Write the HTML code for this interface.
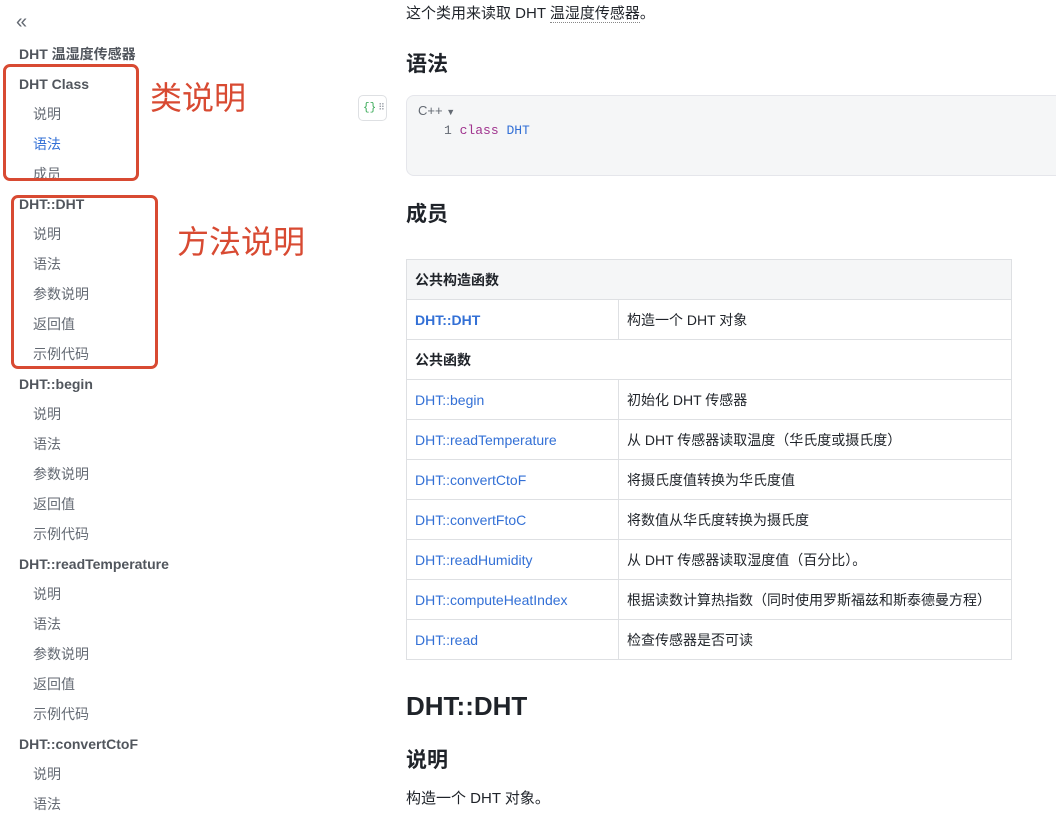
<!DOCTYPE html>
<html><head><meta charset="utf-8"><style>
*{margin:0;padding:0;box-sizing:border-box}
body{width:1056px;height:810px;overflow:hidden;background:#fff;font-family:"Liberation Sans","Noto Sans CJK SC",sans-serif;position:relative;color:#1f2329}
.s{position:absolute;font-size:14px;line-height:20px;white-space:nowrap}
.h{left:19px;font-weight:bold;color:#51565d}
.i{left:33px;color:#646a73}
.box{position:absolute;border:3px solid #d84a32;border-radius:7px}
.lab{position:absolute;color:#d84a32;font-size:32px;line-height:36px}
table{position:absolute;left:406px;top:259px;width:606px;border-collapse:collapse;font-size:14px}
td{border:1px solid #dee0e3;height:40px;padding:0 8px;color:#1f2329}
td a{color:#3370d6}
.gr td{background:#f5f6f7;font-weight:bold}
</style></head><body>
<div class="s" style="left:16px;top:12px;font-size:20px;color:#646a73">«</div>
<div class="s h" style="top:44px">DHT 温湿度传感器</div>
<div class="s h" style="top:74px">DHT Class</div>
<div class="s i" style="top:104px">说明</div>
<div class="s i" style="top:134px;color:#3370d6">语法</div>
<div class="s i" style="top:164px">成员</div>
<div class="s h" style="top:194px">DHT::DHT</div>
<div class="s i" style="top:224px">说明</div>
<div class="s i" style="top:254px">语法</div>
<div class="s i" style="top:284px">参数说明</div>
<div class="s i" style="top:314px">返回值</div>
<div class="s i" style="top:344px">示例代码</div>
<div class="s h" style="top:374px">DHT::begin</div>
<div class="s i" style="top:404px">说明</div>
<div class="s i" style="top:434px">语法</div>
<div class="s i" style="top:464px">参数说明</div>
<div class="s i" style="top:494px">返回值</div>
<div class="s i" style="top:524px">示例代码</div>
<div class="s h" style="top:554px">DHT::readTemperature</div>
<div class="s i" style="top:584px">说明</div>
<div class="s i" style="top:614px">语法</div>
<div class="s i" style="top:644px">参数说明</div>
<div class="s i" style="top:674px">返回值</div>
<div class="s i" style="top:704px">示例代码</div>
<div class="s h" style="top:734px">DHT::convertCtoF</div>
<div class="s i" style="top:764px">说明</div>
<div class="s i" style="top:794px">语法</div>
<div class="box" style="left:3px;top:64px;width:136px;height:117px"></div>
<div class="box" style="left:11px;top:195px;width:147px;height:174px"></div>
<div class="lab" style="left:150px;top:80px">类说明</div>
<div class="lab" style="left:177px;top:224px">方法说明</div>

<div class="s" style="left:406px;top:4px;font-size:15px">这个类用来读取 DHT <span style="border-bottom:1px dotted #888">温湿度传感器</span>。</div>
<div class="s" style="left:406px;top:52px;font-size:21px;line-height:26px;font-weight:bold">语法</div>
<div style="position:absolute;left:358px;top:95px;width:29px;height:26px;border:1px solid #dee0e3;border-radius:5px;font-size:11px;line-height:14px;color:#34a853;padding:5px 0 0 4px;font-family:'Liberation Mono',monospace;white-space:nowrap">{}<span style="color:#8f959e;margin-left:2px;font-size:9px">⠿</span></div>
<div style="position:absolute;left:406px;top:95px;width:660px;height:81px;background:#f5f6f7;border:1px solid #e5e6eb;border-radius:8px"></div>
<div class="s" style="left:418px;top:101px;font-size:13px;color:#646a73">C++ <span style="font-size:9px">▼</span></div>
<div class="s" style="left:444px;top:121px;font-size:13px;font-family:'Liberation Mono',monospace;color:#646a73">1 <span style="color:#a0338e">class</span> <span style="color:#3370d6">DHT</span></div>
<div class="s" style="left:406px;top:202px;font-size:21px;line-height:26px;font-weight:bold">成员</div>
<table>
<tr class="gr"><td colspan="2">公共构造函数</td></tr>
<tr><td style="width:212px"><a style="font-weight:bold">DHT::DHT</a></td><td>构造一个 DHT 对象</td></tr>
<tr><td colspan="2" style="font-weight:bold">公共函数</td></tr>
<tr><td><a>DHT::begin</a></td><td>初始化 DHT 传感器</td></tr>
<tr><td><a>DHT::readTemperature</a></td><td>从 DHT 传感器读取温度（华氏度或摄氏度）</td></tr>
<tr><td><a>DHT::convertCtoF</a></td><td>将摄氏度值转换为华氏度值</td></tr>
<tr><td><a>DHT::convertFtoC</a></td><td>将数值从华氏度转换为摄氏度</td></tr>
<tr><td><a>DHT::readHumidity</a></td><td>从 DHT 传感器读取湿度值（百分比）。</td></tr>
<tr><td><a>DHT::computeHeatIndex</a></td><td>根据读数计算热指数（同时使用罗斯福兹和斯泰德曼方程）</td></tr>
<tr><td><a>DHT::read</a></td><td>检查传感器是否可读</td></tr>
</table>
<div class="s" style="left:406px;top:690px;font-size:26px;line-height:32px;font-weight:bold">DHT::DHT</div>
<div class="s" style="left:406px;top:748px;font-size:21px;line-height:26px;font-weight:bold">说明</div>
<div class="s" style="left:406px;top:789px;font-size:15px">构造一个 DHT 对象。</div>
</body></html>
